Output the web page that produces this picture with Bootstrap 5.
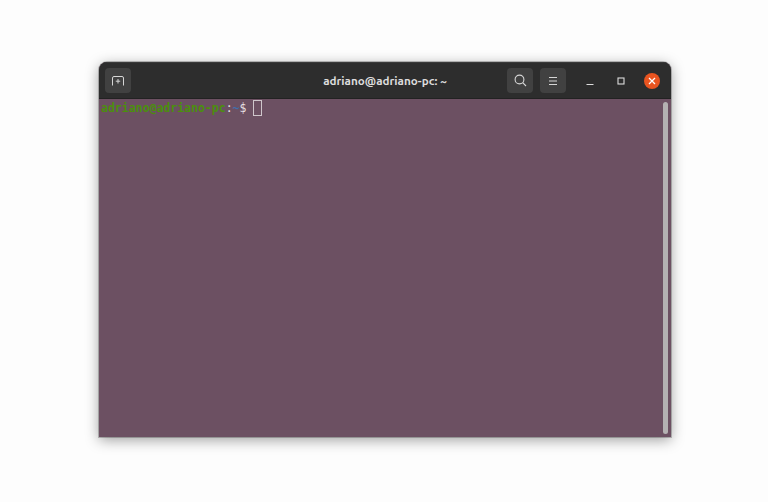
<!DOCTYPE html>
<html lang="en"><head><meta charset="utf-8"><title>Terminal</title>
<link rel="stylesheet" href="https://cdn.jsdelivr.net/npm/bootstrap@5.3.0/dist/css/bootstrap.min.css">
<style>
html,body{height:100%;margin:0;background:#fdfdfd;overflow:hidden}
.stage{padding:62px 97px 65px 99px;height:502px}
.term{height:375px;width:572px;border-radius:8px 8px 0 0;background:#6c5062;box-shadow:0 3px 14px rgba(0,0,0,.38),0 0 0 1px rgba(0,0,0,.22);overflow:hidden;display:flex;flex-direction:column}
.hbar{height:37px;flex:none;background:#2d2d2d;border-bottom:1px solid #222;border-top:1px solid #3a3a3a;padding:0 11px 0 6px;position:relative}
.tool{width:26px;height:25px;background:#414141;border-radius:4px;border:0;padding:0;color:#d6d6d6;display:flex;align-items:center;justify-content:center}
.wtitle{position:absolute;left:0;right:0;top:10px;text-align:center;font:700 11.7px/16px Ubuntu,"Open Sans","Noto Sans",sans-serif;color:#dcdcdc;pointer-events:none}
.ctl{width:16px;height:16px;padding:0;border:0;background:none;color:#dcdcdc;display:flex;align-items:center;justify-content:center}
.ctl-gap{margin-left:15px}
.ctl-first{margin-left:16px}
.gap-seven{margin-right:7px}
.ctl-close{background:#e95420;border-radius:50%;color:#fff}
.tbody{flex:1;position:relative;padding:1px 2px;font:400 11.5px/16px "DejaVu Sans Mono",monospace;color:#e8e0e4;white-space:pre}
.pgreen{color:#4b8f0d;font-weight:700}.pblue{color:#3f6fae;font-weight:700}
.caret{display:inline-block;width:9px;height:16px;border:1px solid #cfc6cb;vertical-align:-4px}
.sbar{position:absolute;right:3px;top:3px;bottom:3px;width:5px;border-radius:2.5px;background:#b4b1b2}
</style></head><body>
<div class="stage">
<div class="term">
 <div class="hbar d-flex align-items-center">
  <button class="tool" aria-label="New tab"><svg width="14" height="12" viewBox="0 0 14 12" fill="none" stroke="currentColor" stroke-width="1"><path d="M1.500 10.500V3a1.500 1.500 0 0 1 1.500-1.500h8a1.500 1.500 0 0 1 1.500 1.500v7.500"/><path d="M7 4v4.500M4.800 6.200h4.400"/></svg></button>
  <div class="wtitle">adriano@adriano-pc: ~</div>
  <div class="ms-auto d-flex align-items-center">
   <button class="tool gap-seven" aria-label="Search"><svg width="13" height="13" viewBox="0 0 13 13" fill="none" stroke="currentColor" stroke-width="1.100"><circle cx="5.500" cy="5.500" r="4.400"/><path d="M8.700 8.700l3.300 3.300"/></svg></button>
   <button class="tool" aria-label="Menu"><svg width="12" height="12" viewBox="0 0 12 12" fill="none" stroke="currentColor" stroke-width="1"><path d="M2 2.500h8M2 6h8M2 9.500h8"/></svg></button>
   <button class="ctl ctl-first" aria-label="Minimize"><svg width="12" height="12" viewBox="0 0 12 12" fill="none" stroke="currentColor" stroke-width="1"><path d="M2.500 9.500h7"/></svg></button>
   <button class="ctl ctl-gap" aria-label="Maximize"><svg width="12" height="12" viewBox="0 0 12 12" fill="none" stroke="currentColor" stroke-width="1.100"><rect x="3" y="3" width="6" height="6"/></svg></button>
   <button class="ctl ctl-close ctl-gap" aria-label="Close"><svg width="10" height="10" viewBox="0 0 10 10" fill="none" stroke="currentColor" stroke-width="1.300"><path d="M2 2l6 6M8 2l-6 6"/></svg></button>
  </div>
 </div>
 <div class="tbody"><span class="pgreen">adriano@adriano-pc</span>:<span class="pblue">~</span>$ <span class="caret"></span><div class="sbar"></div></div>
</div>
</div>
</body></html>
